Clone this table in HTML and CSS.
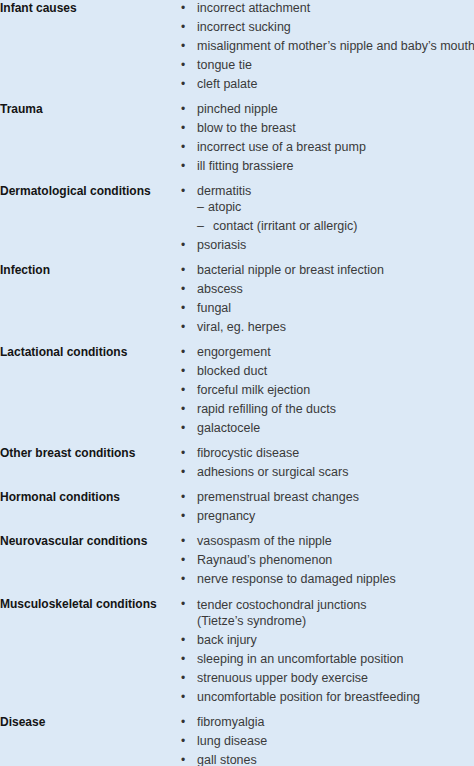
FILE: index.html
```html
<!DOCTYPE html>
<html lang="en">
<head>
<meta charset="utf-8">
<title>Causes of nipple and breast pain</title>
<link rel="stylesheet" href="styles.css">
</head>
<body>
<div class="table">
  <div class="row">
    <div class="label">Infant causes</div>
    <ul class="items">
      <li>incorrect attachment</li>
      <li>incorrect sucking</li>
      <li>misalignment of mother’s nipple and baby’s mouth</li>
      <li>tongue tie</li>
      <li>cleft palate</li>
    </ul>
  </div>
  <div class="row">
    <div class="label">Trauma</div>
    <ul class="items">
      <li>pinched nipple</li>
      <li>blow to the breast</li>
      <li>incorrect use of a breast pump</li>
      <li>ill fitting brassiere</li>
    </ul>
  </div>
  <div class="row">
    <div class="label">Dermatological conditions</div>
    <ul class="items">
      <li>
        <div>dermatitis</div>
        <ul class="sub">
          <li class="first">atopic</li>
          <li class="wide">contact (irritant or allergic)</li>
        </ul>
      </li>
      <li>psoriasis</li>
    </ul>
  </div>
  <div class="row">
    <div class="label">Infection</div>
    <ul class="items">
      <li>bacterial nipple or breast infection</li>
      <li>abscess</li>
      <li>fungal</li>
      <li>viral, eg. herpes</li>
    </ul>
  </div>
  <div class="row">
    <div class="label">Lactational conditions</div>
    <ul class="items">
      <li>engorgement</li>
      <li>blocked duct</li>
      <li>forceful milk ejection</li>
      <li>rapid refilling of the ducts</li>
      <li>galactocele</li>
    </ul>
  </div>
  <div class="row">
    <div class="label">Other breast conditions</div>
    <ul class="items">
      <li>fibrocystic disease</li>
      <li>adhesions or surgical scars</li>
    </ul>
  </div>
  <div class="row">
    <div class="label">Hormonal conditions</div>
    <ul class="items">
      <li>premenstrual breast changes</li>
      <li>pregnancy</li>
    </ul>
  </div>
  <div class="row">
    <div class="label">Neurovascular conditions</div>
    <ul class="items">
      <li>vasospasm of the nipple</li>
      <li>Raynaud’s phenomenon</li>
      <li>nerve response to damaged nipples</li>
    </ul>
  </div>
  <div class="row">
    <div class="label">Musculoskeletal conditions</div>
    <ul class="items">
      <li><div class="wrap">tender costochondral junctions<br>(Tietze’s syndrome)</div></li>
      <li>back injury</li>
      <li>sleeping in an uncomfortable position</li>
      <li>strenuous upper body exercise</li>
      <li>uncomfortable position for breastfeeding</li>
    </ul>
  </div>
  <div class="row">
    <div class="label">Disease</div>
    <ul class="items">
      <li>fibromyalgia</li>
      <li>lung disease</li>
      <li>gall stones</li>
    </ul>
  </div>
</div>
</body>
</html>
```

FILE: styles.css
```css
html, body {
  margin: 0;
  padding: 0;
  background: #dce9f6;
}

body {
  font-family: "Liberation Sans", Arial, sans-serif;
  color: #3a3a3a;
  width: 474px;
  height: 766px;
  overflow: hidden;
}

.table {
  display: flex;
  flex-direction: column;
  gap: 10px;
  padding-top: 1px;
}

.row {
  display: grid;
  grid-template-columns: 181px 1fr;
}

.label {
  font-weight: bold;
  font-size: 12px;
  line-height: 15px;
  color: #141414;
  white-space: nowrap;
}

.items {
  list-style: none;
  margin: 0;
  padding: 0;
  display: flex;
  flex-direction: column;
  gap: 4px;
  font-size: 12.5px;
  line-height: 15px;
  white-space: nowrap;
}

.items > li {
  display: grid;
  grid-template-columns: 16px 1fr;
}

.items > li::before {
  content: "•";
  font-size: 12px;
  color: #333;
}

.items > li > div,
.items > li > .sub {
  grid-column: 2;
}

.wrap {
  line-height: 16px;
}

.sub {
  list-style: none;
  margin: 0;
  padding: 0;
  display: flex;
  flex-direction: column;
  gap: 4px;
}

.sub li::before {
  content: "–";
  display: inline-block;
  width: 11px;
}

.sub li.first {
  margin-top: 1px;
}

.sub li.wide::before {
  width: 16px;
}
```
